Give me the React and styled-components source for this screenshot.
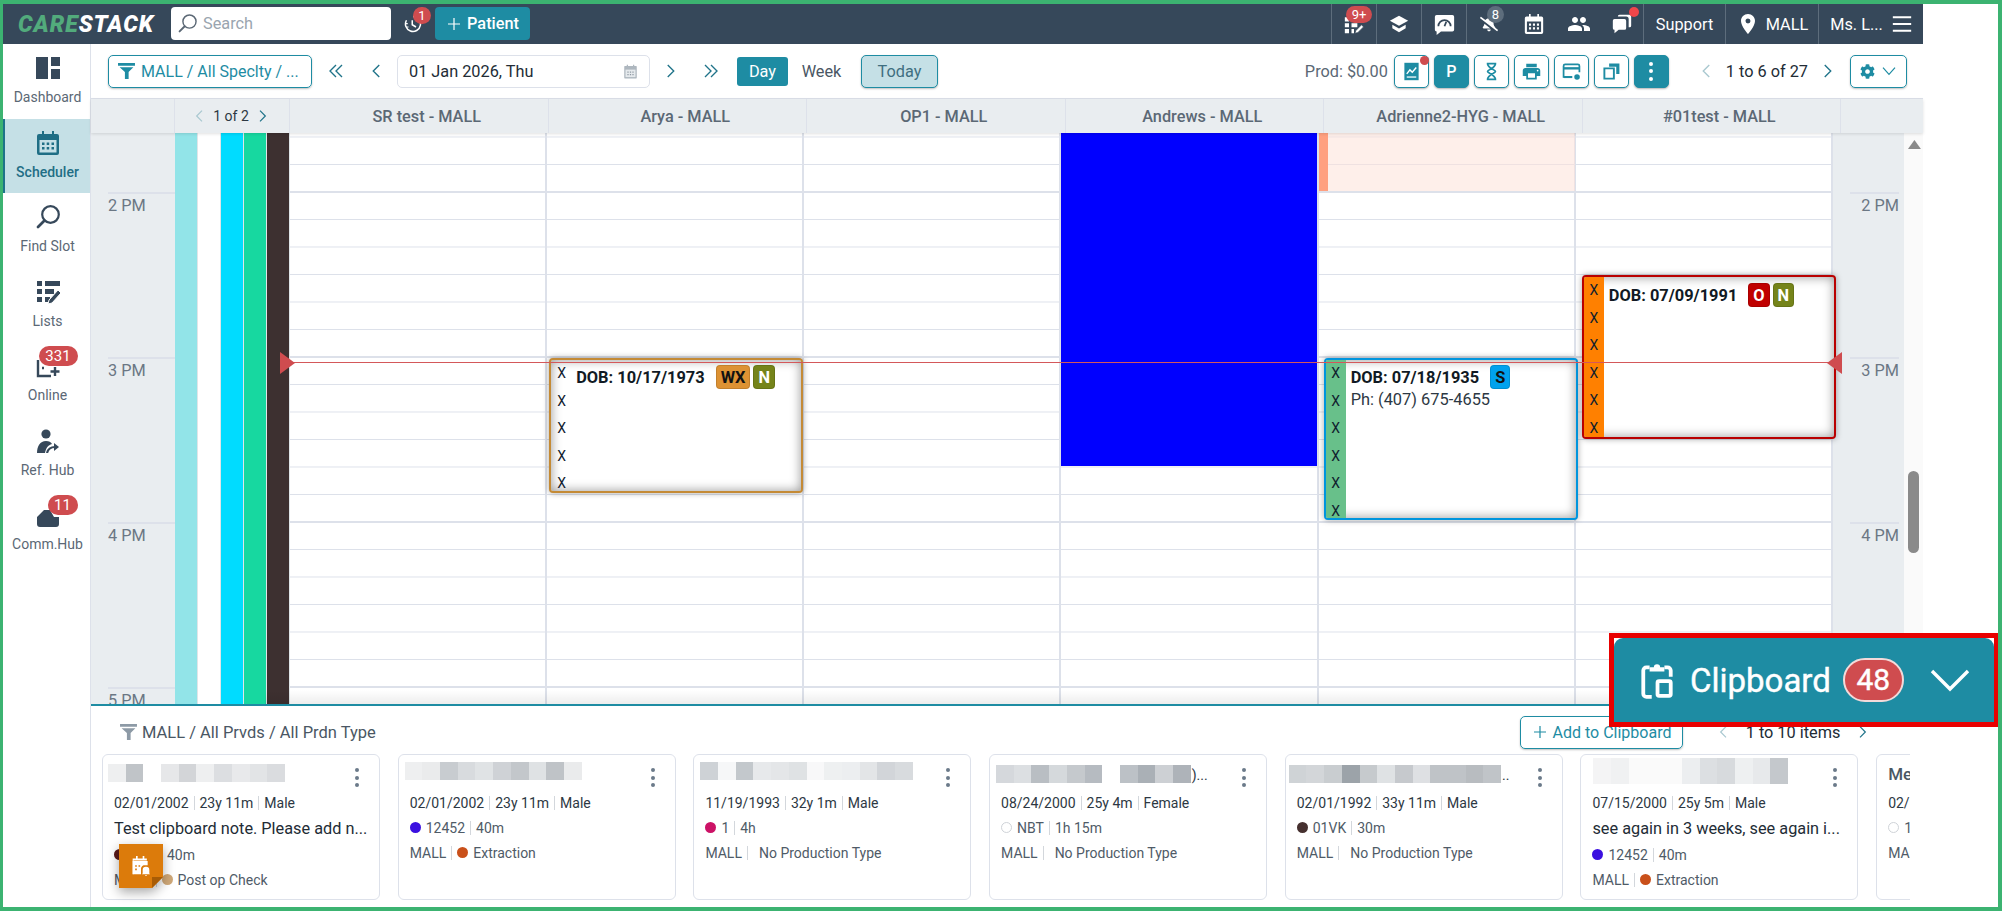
import React from "react";
import styled, { createGlobalStyle } from "styled-components";
import { MdPrint, MdPeople, MdPlace } from "react-icons/md";
import { FaCog, FaBellSlash } from "react-icons/fa";

const TEAL = "#1e8ca3";
const SLATE = "#36485a";
const RED = "#cf4c4f";
const LINE = "#dde1ea";
const FS = "16.3px";

const Global = createGlobalStyle`
  html, body { margin: 0; padding: 0; background: #fff; }
  body { font-family: Roboto, "Liberation Sans", sans-serif; font-size: 14px; color: #2d3843; }
  * { box-sizing: border-box; }
`;

const Frame = styled.div`
  position: relative; width: 2002px; height: 911px; overflow: hidden;
  border: solid #3cb371; border-width: 4px 4px 4px 3px; background: #fff;
`;
const Shell = styled.div`width: 1920px; height: 903px; display: flex; flex-direction: column;`;

/* ---- top bar ---- */
const TopBar = styled.header`height: 40px; background: ${SLATE}; display: flex; align-items: stretch; flex: none;`;
const Logo = styled.div`
  margin-left: 15px; width: 138px; align-self: center; white-space: nowrap;
  font: italic 900 23px Roboto, sans-serif; letter-spacing: .95px; color: #fff;
`;
const LogoGreen = styled.span`color: #52ab7c;`;
const SearchBox = styled.div`
  margin: 3px 0 4px 15px; width: 220px; background: #fff; border-radius: 4px;
  display: flex; align-items: center; gap: 6px; padding-left: 7px; color: #9aa5af; font-size: ${FS};
`;
const TimerWrap = styled.div`position: relative; width: 44px; display: flex; align-items: center; justify-content: center;`;
const TimerBadge = styled.span`
  position: absolute; left: 22px; top: 3px; width: 18px; height: 17px; border-radius: 9px;
  background: ${RED}; color: #fff; font-size: 13px; line-height: 17px; text-align: center;
`;
const PatientBtn = styled.div`
  margin: 3px 0 4px; width: 95px; background: ${TEAL}; border-radius: 4px; color: #fff;
  display: flex; align-items: center; justify-content: center; gap: 5px; font-size: ${FS}; font-weight: 500;
`;
const TopRight = styled.div`margin-left: auto; display: flex; align-items: stretch;`;
const TopCell = styled.div`
  position: relative; width: ${p => p.$w || 45}px; display: flex; align-items: center; justify-content: center; gap: ${p => p.$gap || 6}px;
  color: #fff; font-size: ${FS}; border-left: ${p => p.$plain ? "none" : "1px solid #5d6d7c"};
`;
const TopBadge = styled.span`
  position: absolute; left: ${p => p.$left}px; top: 2px; min-width: ${p => p.$min}px; height: 17px; padding: 0 3px;
  border-radius: 9px; background: ${p => p.$bg || RED}; color: #fff; font-size: 13px; line-height: 17px; text-align: center;
`;
const RedDot = styled.span`
  position: absolute; left: ${p => p.$left}px; top: ${p => p.$top}px; width: 10px; height: 10px; border-radius: 50%; background: ${p => p.$bg || "#f0464a"};
`;

/* ---- sidebar ---- */
const Main = styled.div`flex: 1; display: flex; min-height: 0;`;
const Sidebar = styled.nav`width: 88px; flex: none; background: #fff; border-right: 1px solid ${LINE};`;
const SideItem = styled.div`
  height: 74.5px; padding-top: 12px; display: flex; flex-direction: column; align-items: center; gap: 9px;
  background: ${p => p.$active ? "#c5e0e6" : "#fff"};
  border-left: 2px solid ${p => p.$active ? "#1f7389" : "transparent"};
  color: ${p => p.$active ? "#1f6e85" : "#5b6875"};
  font-size: 14px; line-height: 16px; font-weight: ${p => p.$active ? 500 : 400};
`;
const SideIcon = styled.div`position: relative; width: 24px; height: 24px;`;
const SideBadge = styled.span`
  position: absolute; top: -8px; left: ${p => p.$left}px; width: ${p => p.$w}px; height: 20px; border-radius: 10px;
  background: ${RED}; color: #fff; font-size: 15px; line-height: 20px; text-align: center;
`;

/* ---- toolbar ---- */
const Content = styled.div`flex: 1; min-width: 0; display: flex; flex-direction: column;`;
const Toolbar = styled.div`
  height: 55px; flex: none; display: flex; align-items: center; padding: 0 16px 0 17px; border-bottom: 1px solid ${LINE};
`;
const FilterBtn = styled.div`
  width: 204px; height: 33px; margin-right: 4px; border: 1px solid ${TEAL}; border-radius: 5px; color: ${TEAL};
  display: flex; align-items: center; gap: 6px; padding-left: 9px; font-size: 16px; white-space: nowrap;
  box-shadow: 0 1px 2px rgba(0,0,0,.25);
`;
const NavBtn = styled.div`width: 40.5px; height: 33px; display: flex; align-items: center; justify-content: center; color: #1f7389;`;
const DateBox = styled.div`
  width: 253px; height: 33px; border: 1px solid ${LINE}; border-radius: 5px; padding: 0 11px;
  display: flex; align-items: center; justify-content: space-between; font-size: ${FS}; color: #222c36;
`;
const DayBtn = styled.div`
  width: ${p => p.$w}px; height: 29px; margin-left: ${p => p.$ml || 0}px; border-radius: 3px;
  background: ${p => p.$on ? TEAL : "#fff"}; color: ${p => p.$on ? "#fff" : "#4a5764"};
  display: flex; align-items: center; justify-content: center; font-size: ${FS}; font-weight: 400;
`;
const TodayBtn = styled.div`
  width: 77px; height: 33px; margin-left: 6px; border: 1px solid ${TEAL}; border-radius: 5px; background: #c5e0e6; color: #3f6f80;
  display: flex; align-items: center; justify-content: center; font-size: ${FS}; box-shadow: 0 1px 2px rgba(0,0,0,.25);
`;
const Spacer = styled.div`flex: 1;`;
const Prod = styled.div`color: #5b6875; font-size: ${FS}; margin-right: 6px;`;
const ToolBtn = styled.div`
  position: relative; width: 35px; height: 33px; margin-right: ${p => p.$last ? 0 : 5}px; border-radius: 5px;
  border: 1px solid ${TEAL}; background: ${p => p.$on ? TEAL : "#fff"}; color: ${p => p.$on ? "#fff" : TEAL};
  display: flex; align-items: center; justify-content: center; font-size: 16px; font-weight: 500; box-shadow: 0 1px 2px rgba(0,0,0,.3);
`;
const ToolDot = styled.span`position: absolute; right: -1px; top: 0; width: 9px; height: 9px; border-radius: 50%; background: ${RED};`;
const ToolKebab = styled.span`display: flex; flex-direction: column; gap: 3.5px;`;
const WhiteDot = styled.span`width: 4px; height: 4px; border-radius: 50%; background: #fff;`;
const Pager = styled.div`display: flex; align-items: center; margin-left: 24px; margin-right: 9px; font-size: ${FS}; color: #222c36; gap: 5px;`;
const PagerBtn = styled.span`width: 28px; display: flex; justify-content: center; color: ${p => p.$off ? "#a9c8d0" : "#1f7389"};`;
const SettingsBtn = styled.div`
  width: 57px; height: 33px; border: 1px solid ${TEAL}; border-radius: 5px; color: ${TEAL}; display: flex; align-items: center; justify-content: center; gap: 6px;
  box-shadow: 0 1px 2px rgba(0,0,0,.25);
`;

/* ---- column header ---- */
const HeaderRow = styled.div`
  position: relative; z-index: 5; height: 34px; flex: none; display: flex; background: #e9edf0;
  box-shadow: 0 1px 3px rgba(0,0,0,.12);
`;
const HeadGutter = styled.div`width: 84px; flex: none; border-right: 1px solid ${LINE};`;
const HeadPager = styled.div`
  width: 115px; flex: none; display: flex; align-items: center; justify-content: space-between; padding: 0 13px 0 11px;
  font-size: 14px; color: #2d3843; border-right: 1px solid ${LINE}; white-space: nowrap;
`;
const PagerLabel = styled.span`flex: none; margin: 0 -8px;`;
const HeadCell = styled.div`
  width: 258.5px; flex: none; display: flex; align-items: center; justify-content: center; padding: 1px 0 0 16px;
  font-size: ${FS}; font-weight: 500; color: #5b6875; border-right: 1px solid ${LINE};
`;
const HeadEnd = styled.div`flex: 1;`;

/* ---- scheduler body ---- */
const Body = styled.div`position: relative; height: 571px; flex: none; display: flex; overflow: hidden;`;
const Gutter = styled.div`
  width: ${p => p.$w}px; flex: none; background: #e9edf0; padding-top: 59px; color: #6b7784; font-size: ${FS};
`;
const HourBlock = styled.div`
  height: 165px; margin: ${p => p.$side === "right" ? "0 5px 0 17px" : "0 0 0 17px"};
  border-top: 2px solid ${LINE}; padding-top: 3px; line-height: 18px;
  text-align: ${p => p.$side === "right" ? "right" : "left"};
`;
const Bars = styled.div`width: 115px; flex: none; display: flex; background: #fff;`;
const Bar = styled.div`width: 23px; background: ${p => p.$c}; border-right: 1px solid #dfe5e8;`;
const Col = styled.div`
  position: relative; width: 257.17px; flex: none; border-right: 2px solid ${LINE};
  background-color: #fff;
  background-image:
    linear-gradient(${LINE} 2px, transparent 2px),
    linear-gradient(${LINE} 1.4px, transparent 1.4px);
  background-size: 100% 165px, 100% 27.5px;
  background-position: 0 58px, 0 3.5px;
`;
const Blocked = styled.div`position: absolute; left: 0; top: 0; width: 256px; height: 333px; background: #0000ff;`;
const Soft = styled.div`
  position: absolute; left: 0; top: 0; width: 256px; height: 58px; background: rgba(253,226,217,.55);
  border-left: 9px solid #ffa080;
`;
const Appt = styled.div`
  position: absolute; z-index: 2; left: ${p => p.$left}px; top: ${p => p.$top}px; width: 254px; height: ${p => p.$h}px;
  display: flex; background: #fff; border: 2px solid ${p => p.$c}; border-radius: 4px; overflow: hidden;
  box-shadow: 0 0 6px rgba(0,0,0,.35), inset 0 0 11px rgba(0,0,0,.42);
`;
const XStrip = styled.div`
  width: ${p => p.$w}px; flex: none; background: ${p => p.$c || "transparent"};
  font-size: 14px; color: #10202e; text-align: center;
`;
const XMark = styled.div`height: 27.5px; line-height: 27.5px;`;
const ApptBody = styled.div`padding: ${p => p.$top || 5}px 0 0 ${p => p.$pad}px; font-size: 16.4px; color: #2d3843;`;
const DobRow = styled.div`display: flex; align-items: center; height: 24px; font-weight: 700; color: #111a24; white-space: nowrap;`;
const Tag = styled.span`
  margin-left: ${p => p.$ml}px; height: 24px; padding: 0 ${p => p.$pad || 4}px; border-radius: 4px; background: ${p => p.$bg};
  color: ${p => p.$fg}; font-weight: 700; line-height: 24px; border: 1px solid rgba(0,0,0,.12);
`;
const Phone = styled.div`line-height: 22px; color: #2d3843;`;
const NowLine = styled.div`
  position: absolute; z-index: 3; left: 189px; width: 1560px; top: 229px; height: 1px; background: #d4585a;
`;
const Arrow = styled.div`
  position: absolute; z-index: 3; top: 219px; width: 15px; height: 22px; background: ${RED};
  left: ${p => p.$left}px;
  clip-path: ${p => p.$dir === "r" ? "polygon(0 0,100% 50%,0 100%)" : "polygon(100% 0,0 50%,100% 100%)"};
`;
const Fade = styled.div`
  position: absolute; z-index: 1; left: 174px; width: 1658px; bottom: 0; height: 14px;
  background: linear-gradient(transparent, rgba(0,0,0,.07));
`;
const Scroll = styled.div`position: relative; flex: 1; background: #fafafa;`;
const ScrollUp = styled.div`
  position: absolute; left: 4px; top: 7px; width: 13px; height: 9px; background: #8a8a8a;
  clip-path: polygon(50% 0,100% 100%,0 100%);
`;
const ScrollThumb = styled.div`position: absolute; left: 4px; top: 338px; width: 11px; height: 82px; background: #8a8a8a; border-radius: 6px;`;

/* ---- clipboard panel ---- */
const Panel = styled.section`flex: 1; min-height: 0; border-top: 2px solid ${TEAL}; background: #fff; display: flex; flex-direction: column;`;
const PanelHead = styled.div`height: 48px; flex: none; display: flex; align-items: center; padding: 0 0 0 29px; font-size: 16.5px; color: #4a5764;`;
const PanelFilter = styled.div`display: flex; align-items: center; gap: 5px; margin-top: 4px;`;
const AddBtn = styled.div`
  margin-left: auto; margin-top: 4px; width: 163px; height: 33px; border: 1px solid ${TEAL}; border-radius: 5px; color: ${TEAL};
  display: flex; align-items: center; justify-content: center; gap: 5px; font-size: 16px; box-shadow: 0 1px 2px rgba(0,0,0,.25);
`;
const PanelPager = styled.div`
  width: 240px; flex: none; margin-top: 4px; padding: 0 47px 0 27px; display: flex; align-items: center; justify-content: space-between; font-size: ${FS}; color: #222c36;
`;
const CardRow = styled.div`display: flex; gap: 17.7px; margin: 0 13px 0 11px; overflow: hidden;`;
const Card = styled.article`
  width: 278px; height: 146px; flex: none; border: 1px solid ${LINE}; border-radius: 6px; padding: 0 0 0 11px; background: #fff;
`;
const NameRow = styled.div`height: 35px; display: flex; align-items: flex-start; justify-content: space-between; padding-right: 20px;`;
const Mosaic = styled.div`display: flex; margin: ${p => p.$top}px 0 0 ${p => p.$ml}px; height: ${p => p.$h || 18}px;`;
const Chip = styled.span`width: 17.7px; background: ${p => p.$c};`;
const Ellipsis = styled.span`align-self: flex-end; margin-left: 1px; font-size: 14px; color: #2d3843;`;
const CardName = styled.div`font-size: 17px; font-weight: 500; color: #4a5764; padding-top: 9px;`;
const Kebab = styled.div`display: flex; flex-direction: column; gap: 3.5px; margin-top: 13px;`;
const KDot = styled.span`width: 4px; height: 4px; border-radius: 50%; background: #6b7a8a;`;
const Info = styled.div`
  height: ${p => p.$h || 25}px; display: flex; align-items: center; white-space: nowrap; font-size: 14px;
  color: ${p => p.$c || "#2d3843"};
`;
const Note = styled.div`height: 27px; line-height: 27px; font-size: 16.3px; color: #222c36; white-space: nowrap;`;
const Sep = styled.span`width: 1px; height: 14px; background: #d3d7dc; margin: 0 5px;`;
const Dot = styled.span`
  width: 11px; height: 11px; border-radius: 50%; margin-right: ${p => p.$mr ?? 5}px; background: ${p => p.$c};
  border: ${p => p.$c === "#fff" ? "1px solid #cfd3d8" : "none"}; flex: none;
`;
const Gap = styled.span`width: ${p => p.$w}px; flex: none;`;
const NoteWrap = styled.div`
  position: absolute; z-index: 8; left: 116px; top: 840px; width: 44px; height: 44px;
  filter: drop-shadow(0 4px 6px rgba(0,0,0,.35));
`;
const StickyNote = styled.div`
  width: 44px; height: 44px; background: #dc7b0b;
  display: flex; align-items: center; justify-content: center;
  clip-path: polygon(0 0,100% 0,100% 75%,75% 100%,0 100%);
`;
const Fold = styled.span`position: absolute; right: 0; bottom: 0; width: 11px; height: 11px; background: #a85c06; clip-path: polygon(0 0,100% 0,0 100%);`;

/* ---- clipboard overlay ---- */
const Highlight = styled.div`
  position: absolute; z-index: 20; left: 1606px; top: 629px; width: 390px; height: 94px; border: 5px solid #e80000; background: #fff;
`;
const ClipBar = styled.div`
  height: 100%; background: ${TEAL}; border-radius: 9px 9px 0 0; display: flex; align-items: center; color: #fff;
  padding: 0 0 0 27px; font-size: 33px; -webkit-text-stroke: .4px #fff;
`;
const ClipText = styled.span`margin-left: 17px;`;
const ClipCount = styled.span`
  margin-left: 12px; width: 61px; height: 44px; border-radius: 22px; background: ${RED}; border: 2px solid #f3dada;
  font-size: 30px; line-height: 40px; text-align: center;
`;
const ClipChevron = styled.span`margin-left: 26px; display: flex;`;

/* ---- drawings ---- */
const Svg = ({ s = 24, w, h, vb = "0 0 24 24", children, ...r }) => (
  <svg width={w || s} height={h || s} viewBox={vb} fill="none" {...r}>{children}</svg>
);
const Chev = ({ d = "r", s = 18, sw = 1.8 }) => (
  <Svg s={s}><path d={d === "r" ? "M9 4l8 8-8 8" : "M15 4l-8 8 8 8"} stroke="currentColor" strokeWidth={sw} /></Svg>
);
const DblChev = ({ d = "l" }) => (
  <Svg s={18}>
    <path d={d === "l" ? "M12 4l-8 8 8 8M20 4l-8 8 8 8" : "M4 4l8 8-8 8M12 4l8 8-8 8"} stroke="currentColor" strokeWidth="1.8" />
  </Svg>
);
const Funnel = ({ c }) => (
  <Svg w={17} h={18} vb="0 0 16 17"><path d="M0 1h16v2.5H0zM1.5 5h13L10 9.5V16H6.5V9.5z" fill={c} /></Svg>
);
const Plus = ({ s = 16 }) => <Svg s={s}><path d="M12 3v18M3 12h18" stroke="currentColor" strokeWidth="1.8" /></Svg>;
const Lens = ({ c, s = 22, sw = 2.2 }) => (
  <Svg s={s}><circle cx="14.5" cy="9.5" r="8.3" stroke={c} strokeWidth={sw} /><path d="M8.5 15.5L2 22" stroke={c} strokeWidth={sw + .6} strokeLinecap="round" /></Svg>
);

const DashIcon = () => (
  <Svg><path d="M0 1h12v22H0zM15 1h9v9h-9zM15 13h9v10h-9z" fill={SLATE} /></Svg>
);
const CalIcon = ({ c = "#1f6e85", s = 24 }) => (
  <Svg s={s}>
    <path d="M6 0h2v3h8V0h2v3h3a2 2 0 0 1 2 2v17a2 2 0 0 1-2 2H3a2 2 0 0 1-2-2V5a2 2 0 0 1 2-2h3z" fill={c} />
    <path d="M3.5 9h17v12.5h-17z" fill={c === "#fff" ? SLATE : "#c5e0e6"} />
    <path d="M6 11.5h2.5v2.5H6zM10.7 11.5h2.5v2.5h-2.5zM15.5 11.5H18v2.5h-2.5zM6 16h2.5v2.5H6zM10.7 16h2.5v2.5h-2.5zM15.5 16H18v2.5h-2.5z" fill={c} />
  </Svg>
);
const ListIcon = () => (
  <Svg>
    <path d="M1 1h5v5H1zM9 1h15v5H9zM1 9h5v5H1zM9 9h9v5H9zM1 17h5v5H1zM9 17h5v5H9z" fill={SLATE} />
    <path d="M12 24l1-4L22 10l3 3-9 10z" fill={SLATE} stroke="#fff" strokeWidth="1" />
  </Svg>
);
const OnlineIcon = () => (
  <Svg><path d="M2 6v16h13M6 14h2" stroke={SLATE} strokeWidth="2.4" /><path d="M19 13v9M14.5 17.5h9" stroke={SLATE} strokeWidth="2.4" /></Svg>
);
const RefIcon = () => (
  <Svg>
    <circle cx="10" cy="5" r="4.6" fill={SLATE} />
    <path d="M1 24c0-7 3-12 9-12 3 0 5 1 6 3-4 1-6 4-7 9z" fill={SLATE} />
    <path d="M11 24c1-4 4-6 8-6" stroke={SLATE} strokeWidth="2.2" /><path d="M18 14l5 4-5 4z" fill={SLATE} />
  </Svg>
);
const CommIcon = () => (
  <Svg><path d="M1 14l7-7h6l4 7h5v7a3 3 0 0 1-3 3H4a3 3 0 0 1-3-3z" fill={SLATE} /></Svg>
);
const TimerIcon = () => (
  <Svg s={18}>
    <path d="M12 2a10 10 0 1 1-8.7 5" stroke="#fff" strokeWidth="2" />
    <path d="M11 7v6l5 3" stroke="#fff" strokeWidth="2" />
    <path d="M2 11.5h3M3 16h3" stroke="#fff" strokeWidth="1.6" />
  </Svg>
);
const SchedListIcon = () => (
  <Svg s={20}>
    <path d="M1 4h5v5H1zM9 4h13v5H9zM1 11h5v5H1zM9 11h7v5H9zM1 18h5v5H1zM9 18h3v5H9z" fill="#fff" />
    <path d="M13 23l1-3 7-7 2.5 2.5-7 7z" fill="#fff" stroke={SLATE} />
  </Svg>
);
const LayerIcon = () => (
  <Svg s={20}>
    <path d="M12 2l11 6-11 6L1 8z" fill="#fff" />
    <path d="M4 13v4l8 5 8-5v-4l-8 4.5z" fill="#fff" />
  </Svg>
);
const GaugeBubble = () => (
  <Svg s={21}>
    <path d="M3 1h18a2 2 0 0 1 2 2v15a2 2 0 0 1-2 2H8l-5 4v-4a2 2 0 0 1-2-2V3a2 2 0 0 1 2-2z" fill="#fff" />
    <path d="M5 14a7 7 0 1 1 14 0" stroke={SLATE} strokeWidth="2" /><path d="M12 14l2-5" stroke={SLATE} strokeWidth="2" />
  </Svg>
);
const ChatIcon = () => (
  <Svg s={20}>
    <path d="M9 1h12a2 2 0 0 1 2 2v11a2 2 0 0 1-2 2h-1V6a3 3 0 0 0-3-3H7a2 2 0 0 1 2-2z" fill="#fff" />
    <path d="M3 6h12a2 2 0 0 1 2 2v9a2 2 0 0 1-2 2H8l-5 4v-4a2 2 0 0 1-2-2V8a2 2 0 0 1 2-2z" fill="#fff" />
  </Svg>
);
const Burger = () => <Svg s={20}><path d="M1 4h22M1 12h22M1 20h22" stroke="#fff" strokeWidth="2.4" /></Svg>;
const SmallCal = () => (
  <Svg s={15}>
    <path d="M3 3h18a1 1 0 0 1 1 1v18a1 1 0 0 1-1 1H3a1 1 0 0 1-1-1V4a1 1 0 0 1 1-1zM6 1h2v3H6zM16 1h2v3h-2z" fill="#aeb7bf" />
    <path d="M4 9h16v12H4z" fill="#e6eaed" />
    <path d="M7 12h2v2H7zM11 12h2v2h-2zM15 12h2v2h-2zM7 16h2v2H7zM11 16h2v2h-2zM15 16h2v2h-2z" fill="#8f99a3" />
  </Svg>
);
const ChartNote = () => (
  <Svg s={19}>
    <path d="M3 1h18v22H3z" fill="#1e8ca3" />
    <path d="M6 15l4-5 3 3 5-6" stroke="#fff" strokeWidth="1.8" /><path d="M6 19h12" stroke="#fff" strokeWidth="1.6" />
  </Svg>
);
const Hourglass = () => (
  <Svg s={19}><path d="M6 2h12M6 22h12M7 2c0 6 10 8 10 10S7 16 7 22M17 2c0 6-10 8-10 10s10 4 10 10" stroke="currentColor" strokeWidth="2.2" /></Svg>
);
const ScreenIcon = () => (
  <Svg s={19}>
    <path d="M2 20V5a2 2 0 0 1 2-2h16a2 2 0 0 1 2 2v8" stroke="currentColor" strokeWidth="2.2" />
    <path d="M2 8h20" stroke="currentColor" strokeWidth="3" />
    <path d="M2 19h11" stroke="currentColor" strokeWidth="2.6" /><circle cx="19" cy="19" r="3.5" fill="currentColor" />
  </Svg>
);
const CopyIcon = () => (
  <Svg s={19}>
    <path d="M9 2h13v13h-4V6H9z" fill="currentColor" />
    <path d="M3 8h12v13H3z" stroke="currentColor" strokeWidth="2.4" />
  </Svg>
);
const ClipIcon = () => (
  <Svg w={32} h={38} vb="0 0 30 36">
    <path d="M8 6H5a3 3 0 0 0-3 3v22a3 3 0 0 0 3 3h5M22 6h3a3 3 0 0 1 3 3v6" stroke="#fff" strokeWidth="3.6" />
    <path d="M8 10V6h4a3 3 0 0 1 6 0h4v4z" fill="#fff" />
    <rect x="15.5" y="19" width="12.5" height="14" rx="1.5" stroke="#fff" strokeWidth="3.6" />
  </Svg>
);
const NoteIcon = () => (
  <Svg s={20}>
    <path d="M3 3h16v2.5H3zM6 0h2v3H6zM14 0h2v3h-2zM2 3h1v19H2z" fill="#fff" />
    <path d="M2 6h18v5h-5a5 5 0 0 0-3 5v6H2z" fill="#fff" />
    <path d="M5 11h2v2H5zM9 11h2v2H9zM5 15h2v2H5z" fill="#dc7b0b" />
    <path d="M14 21v-4a4 4 0 0 1 8 0v4l1 1H13zM17 23h2v1h-2z" fill="#fff" />
  </Svg>
);

/* ---- data ---- */
const columns = ["SR test - MALL", "Arya - MALL", "OP1 - MALL", "Andrews - MALL", "Adrienne2-HYG - MALL", "#01test - MALL"];
const hours = ["2 PM", "3 PM", "4 PM", "5 PM"];
const bars = ["#92e4e8", "#fff", "#00dcff", "#17d8a0", "#3d3030"];
const sideItems = [
  { label: "Dashboard", icon: <DashIcon /> },
  { label: "Scheduler", icon: <CalIcon />, active: true },
  { label: "Find Slot", icon: <Lens c={SLATE} s={24} /> },
  { label: "Lists", icon: <ListIcon /> },
  { label: "Online", icon: <OnlineIcon />, badge: "331", bl: 3, bw: 39 },
  { label: "Ref. Hub", icon: <RefIcon /> },
  { label: "Comm.Hub", icon: <CommIcon />, badge: "11", bl: 12, bw: 30 },
];

const cards = [
  { ml: -6, top: 9, chips: ["#eeeff0","#c0c4c8","#fff","#e6e7e9","#d3d5d8","#eeeff0","#dcdee1","#e8e9eb","#e2e4e6","#dadcdf"],
    info: ["02/01/2002", "23y 11m", "Male"], note: "Test clipboard note. Please add n...", dot: "#5a1a1a", code: "", hidden: true, dur: "40m", prod: "Post op Check", prodDot: "#cfa878" },
  { ml: -5, top: 7, chips: ["#eeeff0","#eaebec","#c8ccd0","#d8dbde","#e0e3e5","#cfd2d6","#c3c7cb","#dfe2e4","#bfc3c7","#eaebec"],
    info: ["02/01/2002", "23y 11m", "Male"], dot: "#3b10e0", code: "12452", dur: "40m", prod: "Extraction", prodDot: "#c9501a" },
  { ml: -5, top: 7, chips: ["#ced2d6","#f6f7f8","#c3c8cc","#e7e9eb","#e4e6e8","#dfe2e4","#f8f8f9","#eef0f1","#eceef0","#e3e5e7","#d2d5d9","#d8dbde"],
    info: ["11/19/1993", "32y 1m", "Male"], dot: "#cc1266", code: "1", dur: "4h", prod: "No Production Type" },
  { ml: -5, top: 10, tail: ")...", chips: ["#d5d8dc","#dcdfe2","#b9bec3","#d5d9dc","#c5c9cd","#b6bbc1","#fff","#bcc1c6","#aab0b6","#cdd0d4","#aeb3b9"],
    info: ["08/24/2000", "25y 4m", "Female"], dot: "#fff", code: "NBT", dur: "1h 15m", prod: "No Production Type" },
  { ml: -8, top: 10, tail: "..", chips: ["#cfd3d6","#d3d6d9","#c9cdd0","#9ca3a9","#c6cacd","#dfe2e4","#c6c9cd","#dee0e3","#bfc3c7","#bfc3c7","#b8bcc0","#c0c4c8"],
    info: ["02/01/1992", "33y 11m", "Male"], dot: "#46302f", code: "01VK", dur: "30m", prod: "No Production Type" },
  { ml: 1, top: 3, h: 26, chips: ["#f4f4f5","#f0f1f2","#fafafa","#fafafa","#fafafa","#eceef0","#dcdfe2","#d7dadd","#eef0f1","#e7e9eb","#c4c8cc"],
    info: ["07/15/2000", "25y 5m", "Male"], note: "see again in 3 weeks, see again i...", dot: "#3b10e0", code: "12452", dur: "40m", prod: "Extraction", prodDot: "#c9501a" },
  { name: "Me", info: ["02/01/2002", "23y 11m", "Male"], dot: "#fff", code: "1", dur: "4h", prod: "No Production Type" },
];

const Triple = ({ items }) => (
  <Info>
    {items.map((t, i) => (
      <React.Fragment key={t}>{i > 0 && <Sep />}{t}</React.Fragment>
    ))}
  </Info>
);

const XList = ({ n }) => Array.from({ length: n }, (_, i) => <XMark key={i}>X</XMark>);

const ClipCard = ({ c }) => (
  <Card>
    <NameRow>
      {c.name ? <CardName>{c.name}</CardName> : (
        <Mosaic $top={c.top} $ml={c.ml} $h={c.h}>
          {c.chips.map((col, i) => <Chip key={i} $c={col} />)}
          {c.tail && <Ellipsis>{c.tail}</Ellipsis>}
        </Mosaic>
      )}
      <Kebab><KDot /><KDot /><KDot /></Kebab>
    </NameRow>
    <Triple items={c.info} />
    {c.note && <Note>{c.note}</Note>}
    <Info $c="#4f5b67">
      <Dot $c={c.dot} />
      {c.hidden ? <Gap $w={37} /> : <>{c.code}<Sep /></>}
      {c.dur}
    </Info>
    <Info $c="#4f5b67">
      MALL<Sep />
      {c.prodDot ? <Dot $c={c.prodDot} /> : <Gap $w={6} />}
      {c.prod}
    </Info>
  </Card>
);

export default function App() {
  return (
    <>
      <Global />
      <Frame>
        <Shell>
          <TopBar>
            <Logo><LogoGreen>CARE</LogoGreen>STACK</Logo>
            <SearchBox><Lens c="#5b6875" s={19} sw={1.8} />Search</SearchBox>
            <TimerWrap><TimerIcon /><TimerBadge>1</TimerBadge></TimerWrap>
            <PatientBtn><Plus />Patient</PatientBtn>
            <TopRight>
              <TopCell><SchedListIcon /><TopBadge $left={14} $min={26}>9+</TopBadge></TopCell>
              <TopCell><LayerIcon /></TopCell>
              <TopCell><GaugeBubble /></TopCell>
              <TopCell><FaBellSlash size={18} /><TopBadge $left={20} $min={17} $bg="#5d6d7c">8</TopBadge></TopCell>
              <TopCell $plain><CalIcon c="#fff" s={20} /></TopCell>
              <TopCell $plain><MdPeople size={24} /></TopCell>
              <TopCell $plain $w={42}><ChatIcon /><RedDot $left={28} $top={3} /></TopCell>
              <TopCell $w={82}>Support</TopCell>
              <TopCell $w={93}><MdPlace size={24} />MALL</TopCell>
              <TopCell $w={105} $gap={9}>Ms. L...<Burger /></TopCell>
            </TopRight>
          </TopBar>
          <Main>
            <Sidebar>
              {sideItems.map(it => (
                <SideItem key={it.label} $active={it.active}>
                  <SideIcon>
                    {it.icon}
                    {it.badge && <SideBadge $left={it.bl} $w={it.bw}>{it.badge}</SideBadge>}
                  </SideIcon>
                  {it.label}
                </SideItem>
              ))}
            </Sidebar>
            <Content>
              <Toolbar>
                <FilterBtn><Funnel c={TEAL} />MALL / All Speclty / ...</FilterBtn>
                <NavBtn><DblChev d="l" /></NavBtn>
                <NavBtn><Chev d="l" /></NavBtn>
                <DateBox>01 Jan 2026, Thu<SmallCal /></DateBox>
                <NavBtn><Chev d="r" /></NavBtn>
                <NavBtn><DblChev d="r" /></NavBtn>
                <DayBtn $w={51} $ml={6} $on>Day</DayBtn>
                <DayBtn $w={67}>Week</DayBtn>
                <TodayBtn>Today</TodayBtn>
                <Spacer />
                <Prod>Prod: $0.00</Prod>
                <ToolBtn><ChartNote /><ToolDot /></ToolBtn>
                <ToolBtn $on>P</ToolBtn>
                <ToolBtn><Hourglass /></ToolBtn>
                <ToolBtn><MdPrint size={21} /></ToolBtn>
                <ToolBtn><ScreenIcon /></ToolBtn>
                <ToolBtn><CopyIcon /></ToolBtn>
                <ToolBtn $on $last><ToolKebab><WhiteDot /><WhiteDot /><WhiteDot /></ToolKebab></ToolBtn>
                <Pager>
                  <PagerBtn $off><Chev d="l" /></PagerBtn>
                  1 to 6 of 27
                  <PagerBtn><Chev d="r" /></PagerBtn>
                </Pager>
                <SettingsBtn><FaCog size={15} /><Svg s={16}><path d="M3 7l9 10 9-10" stroke="currentColor" strokeWidth="1.8" /></Svg></SettingsBtn>
              </Toolbar>

              <HeaderRow>
                <HeadGutter />
                <HeadPager>
                  <PagerBtn $off><Chev d="l" s={16} /></PagerBtn>
                  <PagerLabel>1 of 2</PagerLabel>
                  <PagerBtn><Chev d="r" s={16} /></PagerBtn>
                </HeadPager>
                {columns.map(c => <HeadCell key={c}>{c}</HeadCell>)}
                <HeadEnd />
              </HeaderRow>

              <Body>
                <Gutter $w={84}>{hours.map(h => <HourBlock key={h}>{h}</HourBlock>)}</Gutter>
                <Bars>{bars.map((b, i) => <Bar key={i} $c={b} />)}</Bars>
                <Col />
                <Col>
                  <Appt $left={2} $top={225} $h={135} $c="#c48a35">
                    <XStrip $w={21}><XList n={5} /></XStrip>
                    <ApptBody $pad={4}>
                      <DobRow>DOB: 10/17/1973<Tag $ml={11} $bg="#dd9233" $fg="#111">WX</Tag><Tag $ml={3} $bg="#75841a" $fg="#fff">N</Tag></DobRow>
                    </ApptBody>
                  </Appt>
                </Col>
                <Col />
                <Col><Blocked /></Col>
                <Col>
                  <Soft />
                  <Appt $left={5} $top={225} $h={162} $c="#0095dd">
                    <XStrip $w={20} $c="#68c08a"><XList n={6} /></XStrip>
                    <ApptBody $pad={5}>
                      <DobRow>DOB: 07/18/1935<Tag $ml={11} $bg="#00a2ee" $fg="#111">S</Tag></DobRow>
                      <Phone>Ph: (407) 675-4655</Phone>
                    </ApptBody>
                  </Appt>
                </Col>
                <Col>
                  <Appt $left={6} $top={142} $h={164} $c="#b90000">
                    <XStrip $w={20} $c="#ff8000"><XList n={6} /></XStrip>
                    <ApptBody $pad={5} $top={6}>
                      <DobRow>DOB: 07/09/1991<Tag $ml={11} $bg="#c00000" $fg="#fff">O</Tag><Tag $ml={3} $bg="#75841a" $fg="#fff">N</Tag></DobRow>
                    </ApptBody>
                  </Appt>
                </Col>
                <Gutter $w={71}>{hours.map(h => <HourBlock key={h} $side="right">{h}</HourBlock>)}</Gutter>
                <Scroll><ScrollUp /><ScrollThumb /></Scroll>
                <Fade />
                <NowLine />
                <Arrow $dir="r" $left={189} />
                <Arrow $dir="l" $left={1736} />
              </Body>

              <Panel>
                <PanelHead>
                  <PanelFilter><Funnel c="#8d9aa6" />MALL / All Prvds / All Prdn Type</PanelFilter>
                  <AddBtn><Plus />Add to Clipboard</AddBtn>
                  <PanelPager>
                    <PagerBtn $off><Chev d="l" s={16} /></PagerBtn>
                    1 to 10 items
                    <PagerBtn><Chev d="r" s={16} /></PagerBtn>
                  </PanelPager>
                </PanelHead>
                <CardRow>{cards.map((c, i) => <ClipCard key={i} c={c} />)}</CardRow>
              </Panel>
            </Content>
          </Main>
        </Shell>

        <NoteWrap>
          <StickyNote><NoteIcon /></StickyNote>
          <Fold />
        </NoteWrap>

        <Highlight>
          <ClipBar>
            <ClipIcon />
            <ClipText>Clipboard</ClipText>
            <ClipCount>48</ClipCount>
            <ClipChevron><Svg w={40} h={24} vb="0 0 40 24"><path d="M2 3l18 18L38 3" stroke="#fff" strokeWidth="3.4" /></Svg></ClipChevron>
          </ClipBar>
        </Highlight>
      </Frame>
    </>
  );
}
